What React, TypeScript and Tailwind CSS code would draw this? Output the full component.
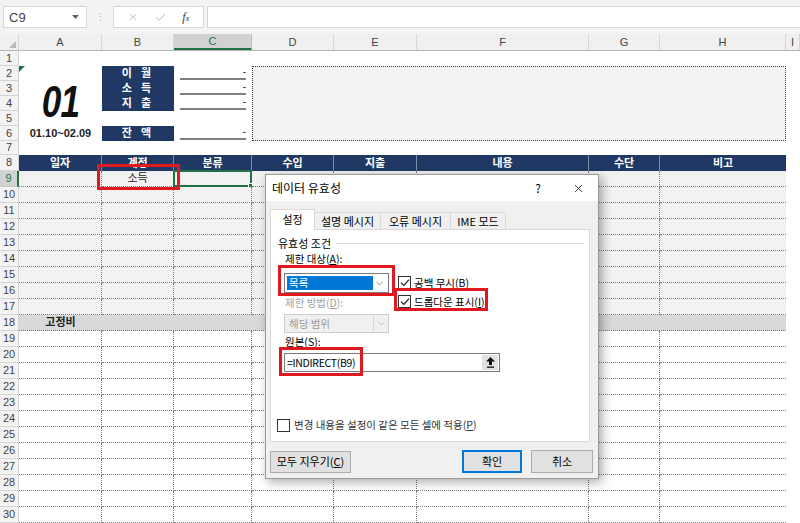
import { ChevronDown, X, Check } from "lucide-react";

const GRID = "grid grid-cols-[19px_83px_72px_78px_82px_83px_172px_71px_126px_1fr]";
const ROW_START = ["row-start-1", "row-start-2", "row-start-3", "row-start-4", "row-start-5", "row-start-6", "row-start-7"];
const LETTERS = ["A", "B", "C", "D", "E", "F", "G", "H", "I"];
const HEAD = ["일자", "계정", "분류", "수입", "지출", "내용", "수단", "비고"];
const FONT = "font-['Liberation_Sans','Noto_Sans_CJK_KR',sans-serif]";
const HAIR = "border-b border-dotted border-[#7a7a7a]";

function RowHead({ n, active }: { n: number; active?: boolean }) {
  return (
    <div
      className={
        active
          ? "flex items-center justify-center border-b border-[#c6c6c6] border-r-2 border-r-[#217346] bg-[#d2d2d2] text-[11px] text-[#217346]"
          : "flex items-center justify-center border-b border-r border-[#d5d5d5] bg-[#f3f3f3] text-[11px] text-[#444]"
      }
    >
      {n}
    </div>
  );
}

function Box({ checked }: { checked?: boolean }) {
  return (
    <span className="flex h-[13px] w-[13px] shrink-0 items-center justify-center border border-[#333] bg-white">
      {checked && (
        <svg width="10" height="9" viewBox="0 0 10 9">
          <path d="M1 4.6 L3.8 7.4 L9 1.6" fill="none" stroke="#222" strokeWidth="1.3" />
        </svg>
      )}
    </span>
  );
}

function Dialog() {
  return (
    <div className="absolute left-[265px] top-[174px] flex h-[305px] w-[334px] flex-col border border-[#9a9a9a] bg-[#f0f0f0] font-['Noto_Sans_CJK_KR',sans-serif] text-[10.5px] leading-normal text-black shadow-[3px_3px_10px_rgba(0,0,0,0.35)]">
      <div className="flex h-[26px] items-center bg-white pl-[6px] pr-[13px] text-[12px]">
        <span>데이터 유효성</span>
        <span className="ml-auto mr-[31px]">?</span>
        <X className="h-[13px] w-[13px]" strokeWidth={1.3} />
      </div>

      <div className="ml-[4px] mt-[8px] flex h-[21px] items-end text-[11px]">
        <div className="relative z-10 flex h-[21px] w-[45px] items-center justify-center border border-b-0 border-[#d9d9d9] bg-white pb-[1px]">설정</div>
        <div className="flex h-[18px] w-[66px] items-center justify-center border border-b-0 border-l-0 border-[#d9d9d9]">설명 메시지</div>
        <div className="flex h-[18px] w-[70px] items-center justify-center border border-b-0 border-l-0 border-[#d9d9d9]">오류 메시지</div>
        <div className="flex h-[18px] w-[55px] items-center justify-center border border-b-0 border-l-0 border-[#d9d9d9]">IME 모드</div>
      </div>

      <div className="-mt-px ml-[4px] flex h-[213px] w-[320px] flex-col border border-[#d9d9d9] bg-white">
        <div className="ml-[7px] mr-[5px] mt-[5px] flex h-[16px] items-center text-[11px]">
          <span>유효성 조건</span>
          <div className="ml-[5px] h-px flex-1 bg-[#dcdcdc]" />
        </div>

        <div className="ml-[13px] flex">
          <div className="flex w-[105px] flex-col">
            <div className="flex h-[16px] items-center pl-px">
              제한 대상(<u>A</u>):
            </div>
            <div className="mt-[6px] flex h-[20px] border border-[#7a7a7a] bg-white p-[2px]">
              <div className="flex flex-1 items-center bg-[#0078d7] pl-[2px] text-white">목록</div>
              <div className="flex w-[13px] items-center justify-center">
                <ChevronDown className="h-[11px] w-[11px] text-[#555]" strokeWidth={1.5} />
              </div>
            </div>
            <div className="mt-[2px] flex h-[16px] items-center pl-px text-[#a0a0a0]">
              제한 방법(<u>D</u>):
            </div>
            <div className="mt-[3px] flex h-[19px] border border-[#cccccc] bg-[#f0f0f0] pl-[4px]">
              <div className="flex flex-1 items-center text-[#9a9a9a]">해당 범위</div>
              <div className="flex w-[15px] items-center justify-center border-l border-[#d9d9d9]">
                <ChevronDown className="h-[11px] w-[11px] text-[#aaa]" strokeWidth={1.5} />
              </div>
            </div>
          </div>
          <div className="ml-[9px] mt-[22px] flex flex-col">
            <div className="flex h-[19px] items-center gap-[3px]">
              <Box checked />
              <span>
                공백 무시(<u>B</u>)
              </span>
            </div>
            <div className="flex h-[19px] items-center gap-[3px]">
              <Box checked />
              <span>
                드롭다운 표시(<u>I</u>)
              </span>
            </div>
          </div>
        </div>

        <div className="ml-[14px] mt-px flex h-[16px] items-center">
          원본(<u>S</u>):
        </div>
        <div className="ml-[13px] mt-[3px] flex h-[19px] w-[216px] border border-[#7a7a7a] bg-white">
          <div className="flex flex-1 items-center pl-[2px] text-[10.5px] tracking-[-0.3px]">=INDIRECT(B9)</div>
          <div className="m-px flex w-[16px] items-center justify-center bg-[#e1e1e1]">
            <svg width="9" height="11" viewBox="0 0 9 11">
              <path d="M4.5 0 L9 4.5 L6 4.5 L6 8 L3 8 L3 4.5 L0 4.5 Z" fill="#111" />
              <rect x="1" y="9.5" width="7" height="1.3" fill="#111" />
            </svg>
          </div>
        </div>

        <div className="mb-[8px] ml-[6px] mt-auto flex items-center gap-[4px] text-[#333]">
          <Box />
          <span>
            변경 내용을 설정이 같은 모든 셀에 적용(<u>P</u>)
          </span>
        </div>
      </div>

      <div className="mt-[8px] flex items-center pl-[4px] pr-[5px] text-[11px]">
        <div className="flex h-[22px] w-[81px] items-center justify-center border border-[#adadad] bg-[#e1e1e1]">
          모두 지우기(<u>C</u>)
        </div>
        <div className="ml-auto flex h-[23px] w-[60px] items-center justify-center border-2 border-[#0078d7] bg-[#e1e1e1]">확인</div>
        <div className="ml-[9px] flex h-[23px] w-[62px] items-center justify-center border border-[#adadad] bg-[#e1e1e1]">취소</div>
      </div>
    </div>
  );
}

function TableRow({ r }: { r: number }) {
  if (r === 8) {
    return (
      <div className={`${GRID} h-[16px] grid-rows-[16px]`}>
        <RowHead n={8} />
        {HEAD.map((h, i) => (
          <div
            key={h}
            className={`flex items-center justify-center bg-[#1f3864] text-[11px] font-bold text-white ${i < 7 ? "border-r border-[#7d8cab]" : ""}`}
          >
            {h}
          </div>
        ))}
        <div className="bg-white" />
      </div>
    );
  }
  if (r === 18) {
    return (
      <div className={`${GRID} h-[16px] grid-rows-[16px]`}>
        <RowHead n={18} />
        <div className={`flex items-center justify-center bg-[#d9d9d9] text-[11px] font-bold text-[#222] ${HAIR}`}>고정비</div>
        <div className={`col-span-7 bg-[#d9d9d9] ${HAIR}`} />
        <div className="bg-white" />
      </div>
    );
  }
  const fill = r <= 17 ? "bg-[#f2f2f2]" : "bg-white";
  return (
    <div className={`${GRID} h-[16px] grid-rows-[16px]`}>
      <RowHead n={r} active={r === 9} />
      {HEAD.map((h, i) => (
        <div
          key={h}
          className={`relative flex items-center justify-center text-[11px] text-[#222] ${fill} ${HAIR} ${i < 7 ? "border-r" : ""}`}
        >
          {r === 9 && i === 1 && "소득"}
          {r === 9 && i === 2 && (
            <>
              <div className="absolute -inset-px border-2 border-[#217346]" />
              <div className="absolute -bottom-[3px] -right-[3px] h-[6px] w-[6px] border border-white bg-[#217346]" />
            </>
          )}
        </div>
      ))}
      <div className="bg-white" />
    </div>
  );
}

export default function App() {
  return (
    <div className={`relative h-[523px] w-[800px] overflow-hidden bg-white leading-none ${FONT}`}>
      {/* formula bar */}
      <div className="flex h-[34px] items-center bg-[#f3f3f3] pl-[3px]">
        <div className="flex h-[22px] w-[84px] items-center border border-[#d6d6d6] bg-white pl-[5px] pr-[7px] text-[13px] text-[#444]">
          C9
          <svg className="ml-auto" width="7" height="4" viewBox="0 0 7 4">
            <path d="M0 0 H7 L3.5 4 Z" fill="#666" />
          </svg>
        </div>
        <div className="flex w-[26px] justify-center text-[11px] leading-none text-[#b0b0b0]">⋮</div>
        <div className="flex h-[22px] w-[91px] items-center justify-around border border-[#d6d6d6] bg-white px-[6px]">
          <X className="h-[12px] w-[12px] text-[#b5b5b5]" strokeWidth={1.5} />
          <Check className="h-[13px] w-[13px] text-[#b5b5b5]" strokeWidth={1.8} />
          <span className="font-['Liberation_Serif',serif] text-[12px] italic text-[#444]">
            f<span className="text-[9px]">x</span>
          </span>
        </div>
        <div className="ml-[3px] h-[22px] flex-1 border border-r-0 border-[#d6d6d6] bg-white" />
      </div>

      {/* column header */}
      <div className={`${GRID} h-[17px] border-b border-[#b5b5b5] bg-[#f0f0f0] text-[11px] text-[#444]`}>
        <div className="relative border-r border-[#d5d5d5]">
          <svg className="absolute bottom-[2px] right-[2px]" width="7" height="7" viewBox="0 0 7 7">
            <path d="M7 0 V7 H0 Z" fill="#b9b9b9" />
          </svg>
        </div>
        {LETTERS.map((l) => (
          <div
            key={l}
            className={
              l === "C"
                ? "flex items-center justify-center border-b-2 border-r border-b-[#217346] border-r-[#c0c0c0] bg-[#d2d2d2] text-[#217346]"
                : "flex items-center justify-center border-r border-[#d5d5d5]"
            }
          >
            {l}
          </div>
        ))}
      </div>

      {/* rows 1-7 */}
      <div className={`${GRID} grid-rows-[15px_15px_15px_15px_15px_15px_14px]`}>
        {ROW_START.map((rs, i) => (
          <div key={rs} className={`col-start-1 ${rs} flex items-center justify-center border-b border-r border-[#d5d5d5] bg-[#f3f3f3] text-[11px] text-[#444]`}>
            {i + 1}
          </div>
        ))}
        <div className="relative col-start-2 row-span-4 row-start-2 flex items-end justify-center pb-[2px]">
          <svg className="absolute left-0 top-0" width="6" height="6" viewBox="0 0 6 6">
            <path d="M0 0 H6 L0 6 Z" fill="#1e7145" />
          </svg>
          <span className="inline-block scale-x-[0.8] font-['Liberation_Sans',sans-serif] text-[44px] font-bold italic leading-none tracking-[-1px] text-[#111]">01</span>
        </div>
        <div className="col-start-2 row-start-6 flex items-center justify-center text-[11px] font-bold text-[#222]">01.10~02.09</div>

        <div className="col-start-3 row-span-3 row-start-2 flex flex-col bg-[#1f3864] text-[11px] font-bold tracking-[3px] text-white">
          <div className="flex flex-1 items-center justify-center">이 월</div>
          <div className="flex flex-1 items-center justify-center">소 득</div>
          <div className="flex flex-1 items-center justify-center">지 출</div>
        </div>
        <div className="col-start-3 row-start-6 flex items-center justify-center bg-[#1f3864] text-[11px] font-bold tracking-[3px] text-white">잔 액</div>

        {["row-start-2", "row-start-3", "row-start-4", "row-start-6"].map((rs) => (
          <div key={rs} className={`col-start-4 ${rs} mx-[6px] mb-px flex items-center justify-end border-b-2 border-[#808080] text-[10px] leading-none text-[#222]`}>
            -
          </div>
        ))}

        <div className="col-span-5 col-start-5 row-span-5 row-start-2 border border-dotted border-[#404040] bg-[#f2f2f2]" />
      </div>

      {/* rows 8-30 */}
      {Array.from({ length: 23 }, (_, k) => k + 8).map((r) => (
        <TableRow key={r} r={r} />
      ))}

      {/* callouts */}
      <div className="absolute left-[97px] top-[164px] h-[26px] w-[83px] border-[3px] border-[#e0191f]" />

      <Dialog />

      <div className="absolute left-[278px] top-[265px] h-[31px] w-[117px] border-[3px] border-[#e0191f]" />
      <div className="absolute left-[394px] top-[288px] h-[23px] w-[94px] border-[3px] border-[#e0191f]" />
      <div className="absolute left-[279px] top-[347px] h-[29px] w-[84px] border-[3px] border-[#e0191f]" />
    </div>
  );
}
